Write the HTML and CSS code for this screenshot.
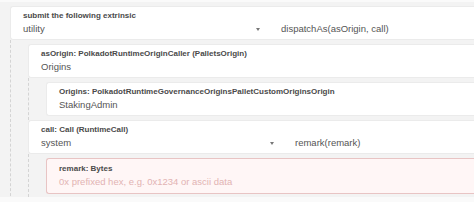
FILE: index.html
```html
<!DOCTYPE html>
<html>
<head>
<meta charset="utf-8">
<link rel="stylesheet" href="styles.css">
</head>
<body>
<div class="page">
  <div class="panel">
    <div class="box sel sel-a">
      <div class="label">submit the following extrinsic</div>
      <div class="row">
        <div class="sec"><span class="val">utility</span><span class="caret"></span></div>
        <div class="val">dispatchAs(asOrigin, call)</div>
      </div>
    </div>
    <div class="params">
      <div class="box">
        <div class="label">asOrigin: PolkadotRuntimeOriginCaller (PalletsOrigin)</div>
        <div class="val">Origins</div>
      </div>
      <div class="params">
        <div class="box">
          <div class="label">Origins: PolkadotRuntimeGovernanceOriginsPalletCustomOriginsOrigin</div>
          <div class="val">StakingAdmin</div>
        </div>
      </div>
      <div class="box sel sel-b">
        <div class="label">call: Call (RuntimeCall)</div>
        <div class="row">
          <div class="sec"><span class="val">system</span><span class="caret"></span></div>
          <div class="val">remark(remark)</div>
        </div>
      </div>
      <div class="params last">
        <div class="box error">
          <div class="label">remark: Bytes</div>
          <div class="val placeholder">0x prefixed hex, e.g. 0x1234 or ascii data</div>
        </div>
      </div>
    </div>
  </div>
</div>
</body>
</html>
```

FILE: styles.css
```css
html, body {
  margin: 0;
  padding: 0;
  background: #fafafa;
  font-family: "Liberation Sans", Arial, sans-serif;
  overflow: hidden;
}
.page {
  padding-top: 2px;
}
.panel {
  background: #f3f3f3;
  padding: 4px 0 5px 10px;
  height: 195px;
  box-sizing: border-box;
}
.box {
  background: #fff;
  border: 1px solid #ebebeb;
  border-right: none;
  border-radius: 3px 0 0 3px;
  height: 34px;
  box-sizing: border-box;
  padding: 4px 0 0 12px;
  white-space: nowrap;
  overflow: hidden;
}
.label {
  font-size: 8px;
  font-weight: bold;
  color: #4a4a4a;
  line-height: 10px;
}
.val {
  font-size: 9.5px;
  color: #555;
  line-height: 14px;
  margin-top: 1px;
}
.row {
  display: flex;
  align-items: center;
}
.row .val { margin-top: 1px; }
.sec {
  display: flex;
  align-items: center;
  justify-content: space-between;
  padding-right: 21px;
  box-sizing: border-box;
}
.sel-a .sec { width: 258px; }
.sel-b .sec { width: 254px; }
.caret {
  width: 0;
  height: 0;
  border-left: 2.5px solid transparent;
  border-right: 2.5px solid transparent;
  border-top: 3px solid #777;
  margin-top: 2px;
}
.params {
  border-left: 1px dashed #d4d4d4;
  padding: 4px 0 4px 17px;
}
.params.last {
  padding-bottom: 3px;
}
.box.error {
  background: #fff6f6;
  border: 1px solid #e8c4c4;
  border-right: none;
  height: 36px;
  padding-top: 5px;
}
.placeholder {
  color: #e2b3b3;
}
```
